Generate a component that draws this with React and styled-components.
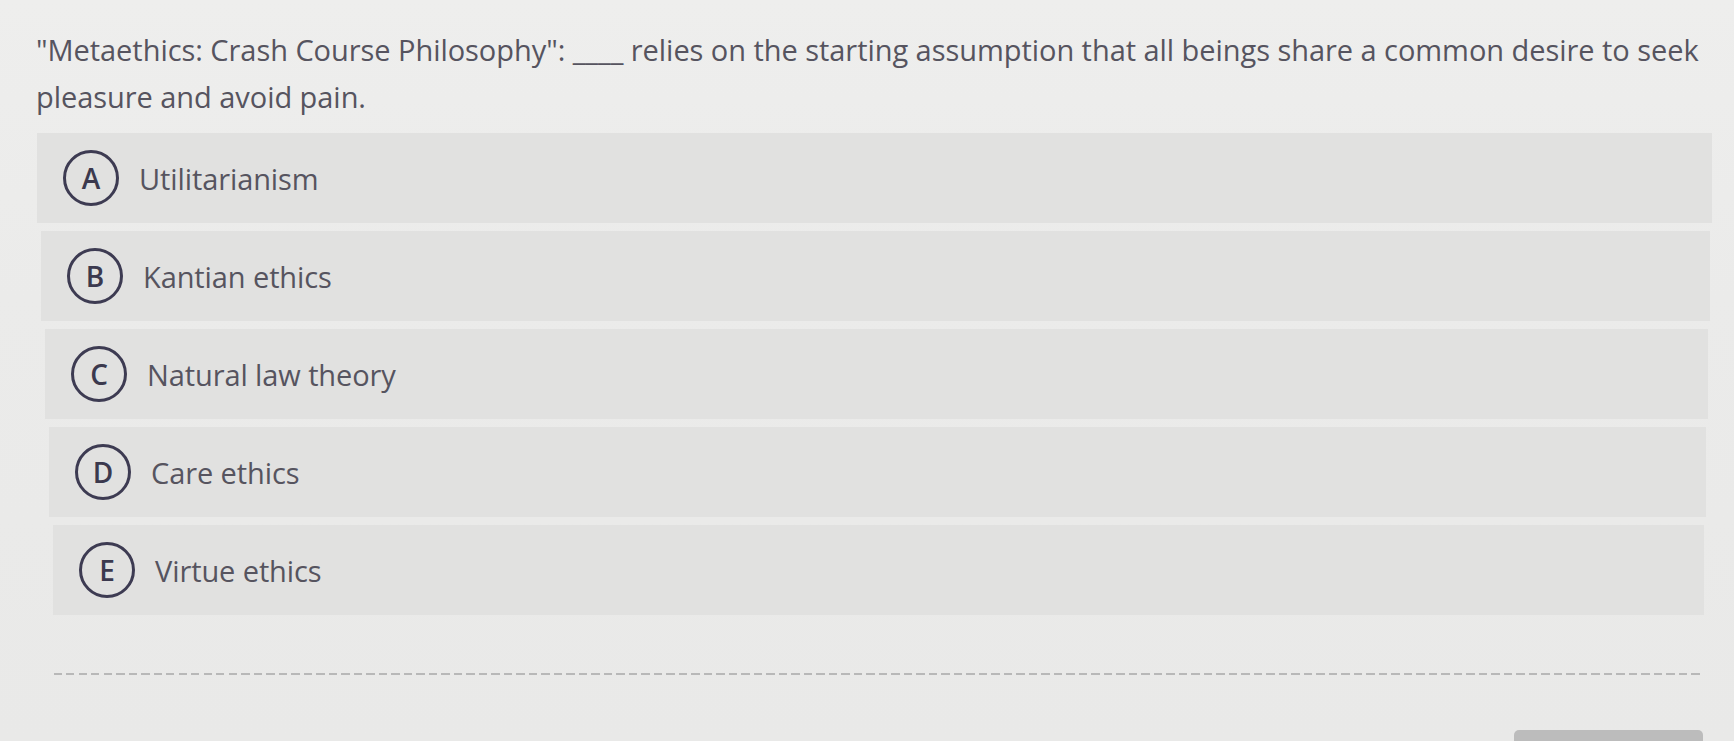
import React from "react";
import styled, { createGlobalStyle } from "styled-components";

const Global = createGlobalStyle`
  html, body {
    margin: 0;
    padding: 0;
    background: #ebebea;
  }
  body {
    font-family: "Open Sans", "Noto Sans", sans-serif;
    overflow: hidden;
  }
`;

const Page = styled.div`
  width: 1734px;
  height: 741px;
  box-sizing: border-box;
  padding-top: 26px;
  background: linear-gradient(180deg, #eeeeed 0%, #ebebea 40%, #e9e9e8 100%);
  display: flex;
  flex-direction: column;
  overflow: hidden;
`;

const Question = styled.p`
  margin: 0 20px 0 36px;
  font-size: 29px;
  line-height: 47px;
  color: #56545f;
  letter-spacing: -0.05px;
`;

const OptionList = styled.div`
  margin-top: 13px;
  display: flex;
  flex-direction: column;
  gap: 8px;
`;

const Option = styled.div`
  height: 90px;
  margin-left: ${(p) => 37 + p.$shift * 4}px;
  margin-right: ${(p) => 22 + p.$shift * 2}px;
  padding-left: 26px;
  box-sizing: border-box;
  background: #e1e1e0;
  display: flex;
  align-items: center;
  gap: 20px;
`;

const Badge = styled.span`
  width: 50px;
  height: 50px;
  flex: none;
  border: 3px solid #3d3b52;
  border-radius: 50%;
  display: flex;
  align-items: center;
  justify-content: center;
  font-size: 28px;
  font-weight: 600;
  color: #3b394e;
`;

const Label = styled.span`
  font-size: 29px;
  color: #56545f;
  letter-spacing: -0.1px;
`;

const Divider = styled.div`
  flex: none;
  margin: 58px 30px 0 54px;
  height: 2px;
  background: repeating-linear-gradient(
    90deg,
    #b8b8b8 0px,
    #b8b8b8 8px,
    transparent 8px,
    transparent 12.5px
  );
`;

const Footer = styled.div`
  margin-top: 55px;
  padding-right: 31px;
  display: flex;
  justify-content: flex-end;
`;

const SubmitButton = styled.div`
  width: 189px;
  height: 40px;
  border-radius: 5px;
  background: #bcbcbc;
`;

const options = [
  { key: "A", text: "Utilitarianism" },
  { key: "B", text: "Kantian ethics" },
  { key: "C", text: "Natural law theory" },
  { key: "D", text: "Care ethics" },
  { key: "E", text: "Virtue ethics" },
];

export default function App() {
  return (
    <>
      <Global />
      <Page>
        <Question>
          "Metaethics: Crash Course Philosophy": ____ relies on the starting
          assumption that all beings share a common desire to seek pleasure and
          avoid pain.
        </Question>
        <OptionList>
          {options.map((o, i) => (
            <Option key={o.key} $shift={i}>
              <Badge>{o.key}</Badge>
              <Label>{o.text}</Label>
            </Option>
          ))}
        </OptionList>
        <Divider />
        <Footer>
          <SubmitButton />
        </Footer>
      </Page>
    </>
  );
}
